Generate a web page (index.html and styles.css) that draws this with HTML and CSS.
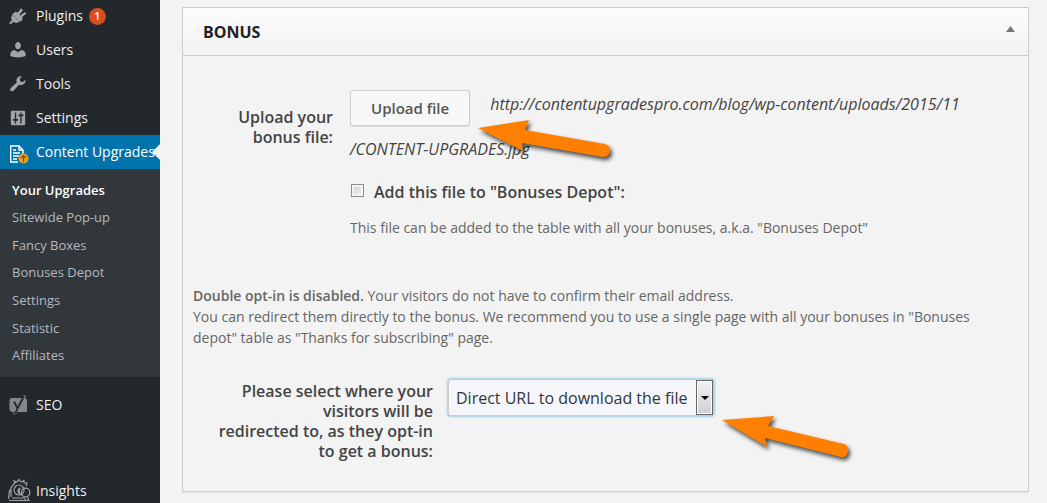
FILE: index.html
```html
<!DOCTYPE html>
<html lang="en">
<head>
<meta charset="utf-8">
<meta name="viewport" content="width=device-width, initial-scale=1">
<title>Content Upgrades</title>
<link rel="stylesheet" href="styles.css">
</head>
<body>
<div class="layout">
  <nav class="sidebar" aria-label="Admin menu">
    <a class="item" href="#plugins">
      <svg class="icon" viewBox="0 0 20 20"><path fill="currentColor" d="M4 8.500 11.500 16C9.500 18 6.500 18 4.500 16.700L2.500 19 .500 19 .500 17.500 3.300 14.500C2 12.500 2.200 10.300 4 8.500zM5 7.500 7.500 5 9.500 6.500 13.500 1.500 15.500 3.500 11.500 8.500 12.500 9.500 17.500 5.500 19.300 7.300 14.300 11.300 15.500 13 12.700 15.600z"/><path fill="currentColor" d="M3.500 8 6 6.500 15 14.500 12 16.500z"/></svg>
      Plugins <span class="badge">1</span>
    </a>
    <a class="item" href="#users">
      <svg class="icon" viewBox="0 0 20 20"><path fill="currentColor" d="M10 9.300c-2 0-3.200-2.200-3.200-4.200C6.800 3.200 8.200 1 10 1s3.200 2.200 3.200 4.100c0 2-1.200 4.200-3.200 4.200zM14 10c2.600.4 4.500 2.400 4.500 5.200v1.600c-2.200 1-5 1.600-8.500 1.600s-6.300-.6-8.500-1.600v-1.600C1.500 12.400 3.400 10.400 6 10L10 12.500z"/></svg>
      Users
    </a>
    <a class="item" href="#tools">
      <svg class="icon" viewBox="0 0 20 20"><path fill="currentColor" d="M16.700 9.800c-1.500 1.500-3.700 1.800-5.500.9l-6.300 6.700c-.9.900-2.200.9-3 .1-.9-.9-.8-2.200.1-3l6.700-6.300C7.900 6.400 8.200 4.200 9.700 2.800c1.300-1.300 3.200-1.700 4.900-1.200L11.900 4.300l.6 3 3 .6 2.700-2.700c.4 1.600 0 3.400-1.500 4.600z"/></svg>
      Tools
    </a>
    <a class="item" href="#settings">
      <svg class="icon" viewBox="0 0 20 20"><path fill="currentColor" fill-rule="evenodd" d="M3 2h14l1 1v14l-1 1H3l-1-1V3zM6.500 4v7H4.500v2h2v3h1.500v-3h2v-2H8V4zM12.500 16h1.500V8h2V6h-2V4h-1.500v2h-2v2h2z"/></svg>
      Settings
    </a>
    <a class="item current" href="#content-upgrades" aria-current="page">
      <svg class="icon wide" viewBox="0 0 20 20"><g fill="none" stroke="#fff" stroke-width="1.400"><path d="M9 18H1.700V2H10l4 4v4.500M10 2v4h4"/><path d="M4 6h3M4 9h7M4 12h6M4 15h4"/></g><circle cx="14.500" cy="14.500" r="5" fill="#f39c1f"/><path d="M14.500 18v-6M12 14l2.500-2.500L17 14" fill="none" stroke="#785010" stroke-width="1.200"/></svg>
      Content Upgrades
    </a>
    <ul class="submenu">
      <li><a class="selected" href="#upgrades">Your Upgrades</a></li>
      <li><a href="#popup">Sitewide Pop-up</a></li>
      <li><a href="#boxes">Fancy Boxes</a></li>
      <li><a href="#depot">Bonuses Depot</a></li>
      <li><a href="#options">Settings</a></li>
      <li><a href="#statistic">Statistic</a></li>
      <li><a href="#affiliates">Affiliates</a></li>
    </ul>
    <a class="item seo" href="#seo">
      <svg class="icon wide" viewBox="0 0 20 20"><path d="M3 3h10.500L14.500.500H17L16 3q2 .5 2 2.500V17H8q-1 2.500-4 2.500V17Q.500 17 .500 14V6Q.500 3 3 3z" fill="#82878c"/><path d="M5 6.500 8.500 13.500 14.800 1.500M8.500 13.500Q7 18 4.500 18" fill="none" stroke="#23282d" stroke-width="1.800"/></svg>
      SEO
    </a>
    <a class="item insights" href="#insights">
      <svg class="icon large" viewBox="0 0 24 24"><g fill="none" stroke="currentColor" stroke-width="1.200"><path d="M4 19V10L6 7 8 5 7 3 10 4 12 1.500 14 4 17 2.500 17 5 20 5 19 8M4 11 2.500 13 1.500 21M2 22.500h18M5 20h12"/><circle cx="12" cy="12" r="5"/><circle cx="18.500" cy="14.500" r="4.300"/><path d="m20.500 19 1.500 3.500h-3l-2-3"/></g><path fill="currentColor" d="M14 9.500a3.500 3.500 0 1 0 0 7 6 6 0 0 1 0-7z"/></svg>
      Insights
    </a>
  </nav>
  <main class="content">
    <section class="panel">
      <header class="panel-head">
        <h2>BONUS</h2>
        <button class="toggle" type="button" aria-label="Collapse panel"></button>
      </header>
      <div class="panel-body">
        <div class="row upload">
          <div class="label">Upload your bonus file:</div>
          <div class="field">
            <p class="file"><button class="button" type="button">Upload file</button><em>http://contentupgradespro.com/blog/wp-content/uploads/2015/11<wbr>/CONTENT-UPGRADES.jpg</em></p>
            <label class="check"><input type="checkbox">Add this file to "Bonuses Depot":</label>
            <p class="hint">This file can be added to the table with all your bonuses, a.k.a. "Bonuses Depot"</p>
          </div>
        </div>
        <p class="notice"><strong>Double opt-in is disabled.</strong> Your visitors do not have to confirm their email address.<br>You can redirect them directly to the bonus. We recommend you to use a single page with all your bonuses in "Bonuses depot" table as "Thanks for subscribing" page.</p>
        <div class="row redirect">
          <label class="label" for="target">Please select where your visitors will be<br>redirected to, as they opt-in to get a bonus:</label>
          <div class="select">
            <select id="target"><option>Direct URL to download the file</option></select>
            <span class="drop"></span>
          </div>
        </div>
      </div>
    </section>
  </main>
</div>
<svg class="arrow first" width="133" height="38" viewBox="0 0 133 38"><path d="M0 8 51 0 47 10 127 24Q133 26 132 31 131 37 125 37L44 23 45 31z"/></svg>
<svg class="arrow second" width="127" height="42" viewBox="0 0 127 42"><path d="M0 4 52 0 46 10 122 28Q127 30 126 35 125 42 119 41L43 22 45 31z"/></svg>
</body>
</html>
```
FILE: styles.css
```css
* { box-sizing: border-box; }
body {
  margin: 0;
  height: 100vh;
  overflow: hidden;
  background: #f3f3f3;
  color: #444;
  font: 14px/20px "Open Sans", sans-serif;
}
p, ul, h2 { margin: 0; padding: 0; }
.layout { display: flex; min-height: 100vh; }

.sidebar { flex: none; width: 160px; margin-top: -1px; background: #23282d; color: #eee; }
.item {
  position: relative;
  display: flex;
  align-items: center;
  height: 34px;
  padding-left: 36px;
  color: #eee;
  text-decoration: none;
  white-space: nowrap;
}
.icon { position: absolute; left: 9px; width: 18px; height: 18px; color: #a0a5aa; }
.icon.wide { width: 20px; height: 20px; }
.current .icon { top: 9px; }
.icon.large { left: 7px; width: 24px; height: 24px; top: 4px; }
.badge {
  width: 17px;
  margin-left: 6px;
  border-radius: 9px;
  background: #d54e21;
  color: #fff;
  font-size: 10px;
  font-weight: 600;
  line-height: 17px;
  text-align: center;
}
.current { background: #0073aa; color: #fff; }
.current::after {
  content: "";
  position: absolute;
  right: 0;
  border: 8px solid transparent;
  border-left: 0;
  border-right-color: #f1f1f1;
}
.submenu {
  display: grid;
  grid-auto-rows: 1fr;
  height: 208px;
  padding: 7px 12px 8px;
  background: #32373c;
  list-style: none;
  font-size: 13px;
}
.submenu li { display: flex; align-items: center; }
.submenu a { color: #b4b9be; text-decoration: none; }
.submenu .selected { color: #fff; font-weight: 600; }
.seo { margin-top: 11px; }
.insights { margin-top: 52px; }

.content { flex: 1; padding: 7px 18px 11px 22px; }
.panel { border: 1px solid #ccc; box-shadow: 0 1px 1px rgba(0, 0, 0, .05); }
.panel-head {
  display: flex;
  align-items: center;
  justify-content: space-between;
  height: 48px;
  padding: 0 13px 0 20px;
  border-bottom: 1px solid #ccc;
  background: linear-gradient(#fcfcfc, #f3f3f3);
}
.panel-head h2 { color: #222; font-size: 16px; font-weight: 700; }
.toggle {
  width: 9px;
  height: 6px;
  margin-bottom: 5px;
  padding: 0;
  border: 0;
  background: #777;
  clip-path: polygon(50% 0, 100% 100%, 0 100%);
}
.panel-body { padding: 35px 10px 30px; }
.row { display: flex; font-size: 16px; }
.label { font-weight: 600; text-align: right; }
.upload .label { flex: none; width: 140px; padding: 16px 0 0 32px; }
.field { flex: 1; padding: 0 10px 0 17px; }
.file { line-height: 45px; margin-top: -9px; }
.button {
  height: 36px;
  margin-right: 20px;
  padding: 0 20px;
  border: 1px solid #ccc;
  border-radius: 3px;
  background: #f7f7f7;
  box-shadow: 0 1px 0 #ddd;
  color: #555;
  font: 600 15px/32px "Open Sans", sans-serif;
  vertical-align: -4px;
}
.check { display: flex; align-items: center; gap: 9px; margin-top: 10px; font-weight: 600; }
.check input {
  appearance: none;
  width: 13px;
  height: 13px;
  margin: 0 1px 4px;
  border: 1px solid #8e8f8f;
  background: linear-gradient(135deg, #cbcfd5, #f6f6f6);
  box-shadow: inset 0 0 0 2px #f4f4f4;
}
.hint { margin-top: 16px; color: #666; font-size: 14px; }
.notice { margin-top: 47px; padding-right: 20px; color: #666; line-height: 21px; }
.notice strong { font-weight: 600; }
.redirect { gap: 15px; margin-top: 31px; }
.redirect .label { width: 240px; padding: 2px 0 0 20px; }
.select { position: relative; align-self: flex-start; }
.select select {
  appearance: none;
  width: 266px;
  height: 37px;
  padding: 0 7px;
  border: 1px solid #ccc;
  border-radius: 3px;
  outline: 0;
  background: #f4f6fa;
  box-shadow: 0 0 2px 1px #9fcfe2;
  color: #32373c;
  font: 16px/32px "Open Sans", sans-serif;
}
.drop {
  position: absolute;
  inset: 1px 1px 1px auto;
  display: flex;
  align-items: center;
  justify-content: center;
  width: 17px;
  border: 1px solid #666;
  background: linear-gradient(#f2f2f2, #cfcfcf);
  box-shadow: inset 0 0 0 1px #fff;
  pointer-events: none;
}
.drop::after { content: ""; border: 4px solid transparent; border-top-color: #000; border-bottom: 0; }
.arrow { position: absolute; overflow: visible; fill: #ff8000; filter: drop-shadow(2px 3px 2px rgba(0, 0, 0, .7)); pointer-events: none; }
.first { left: 478px; top: 120px; }
.second { left: 722px; top: 416px; }
```
